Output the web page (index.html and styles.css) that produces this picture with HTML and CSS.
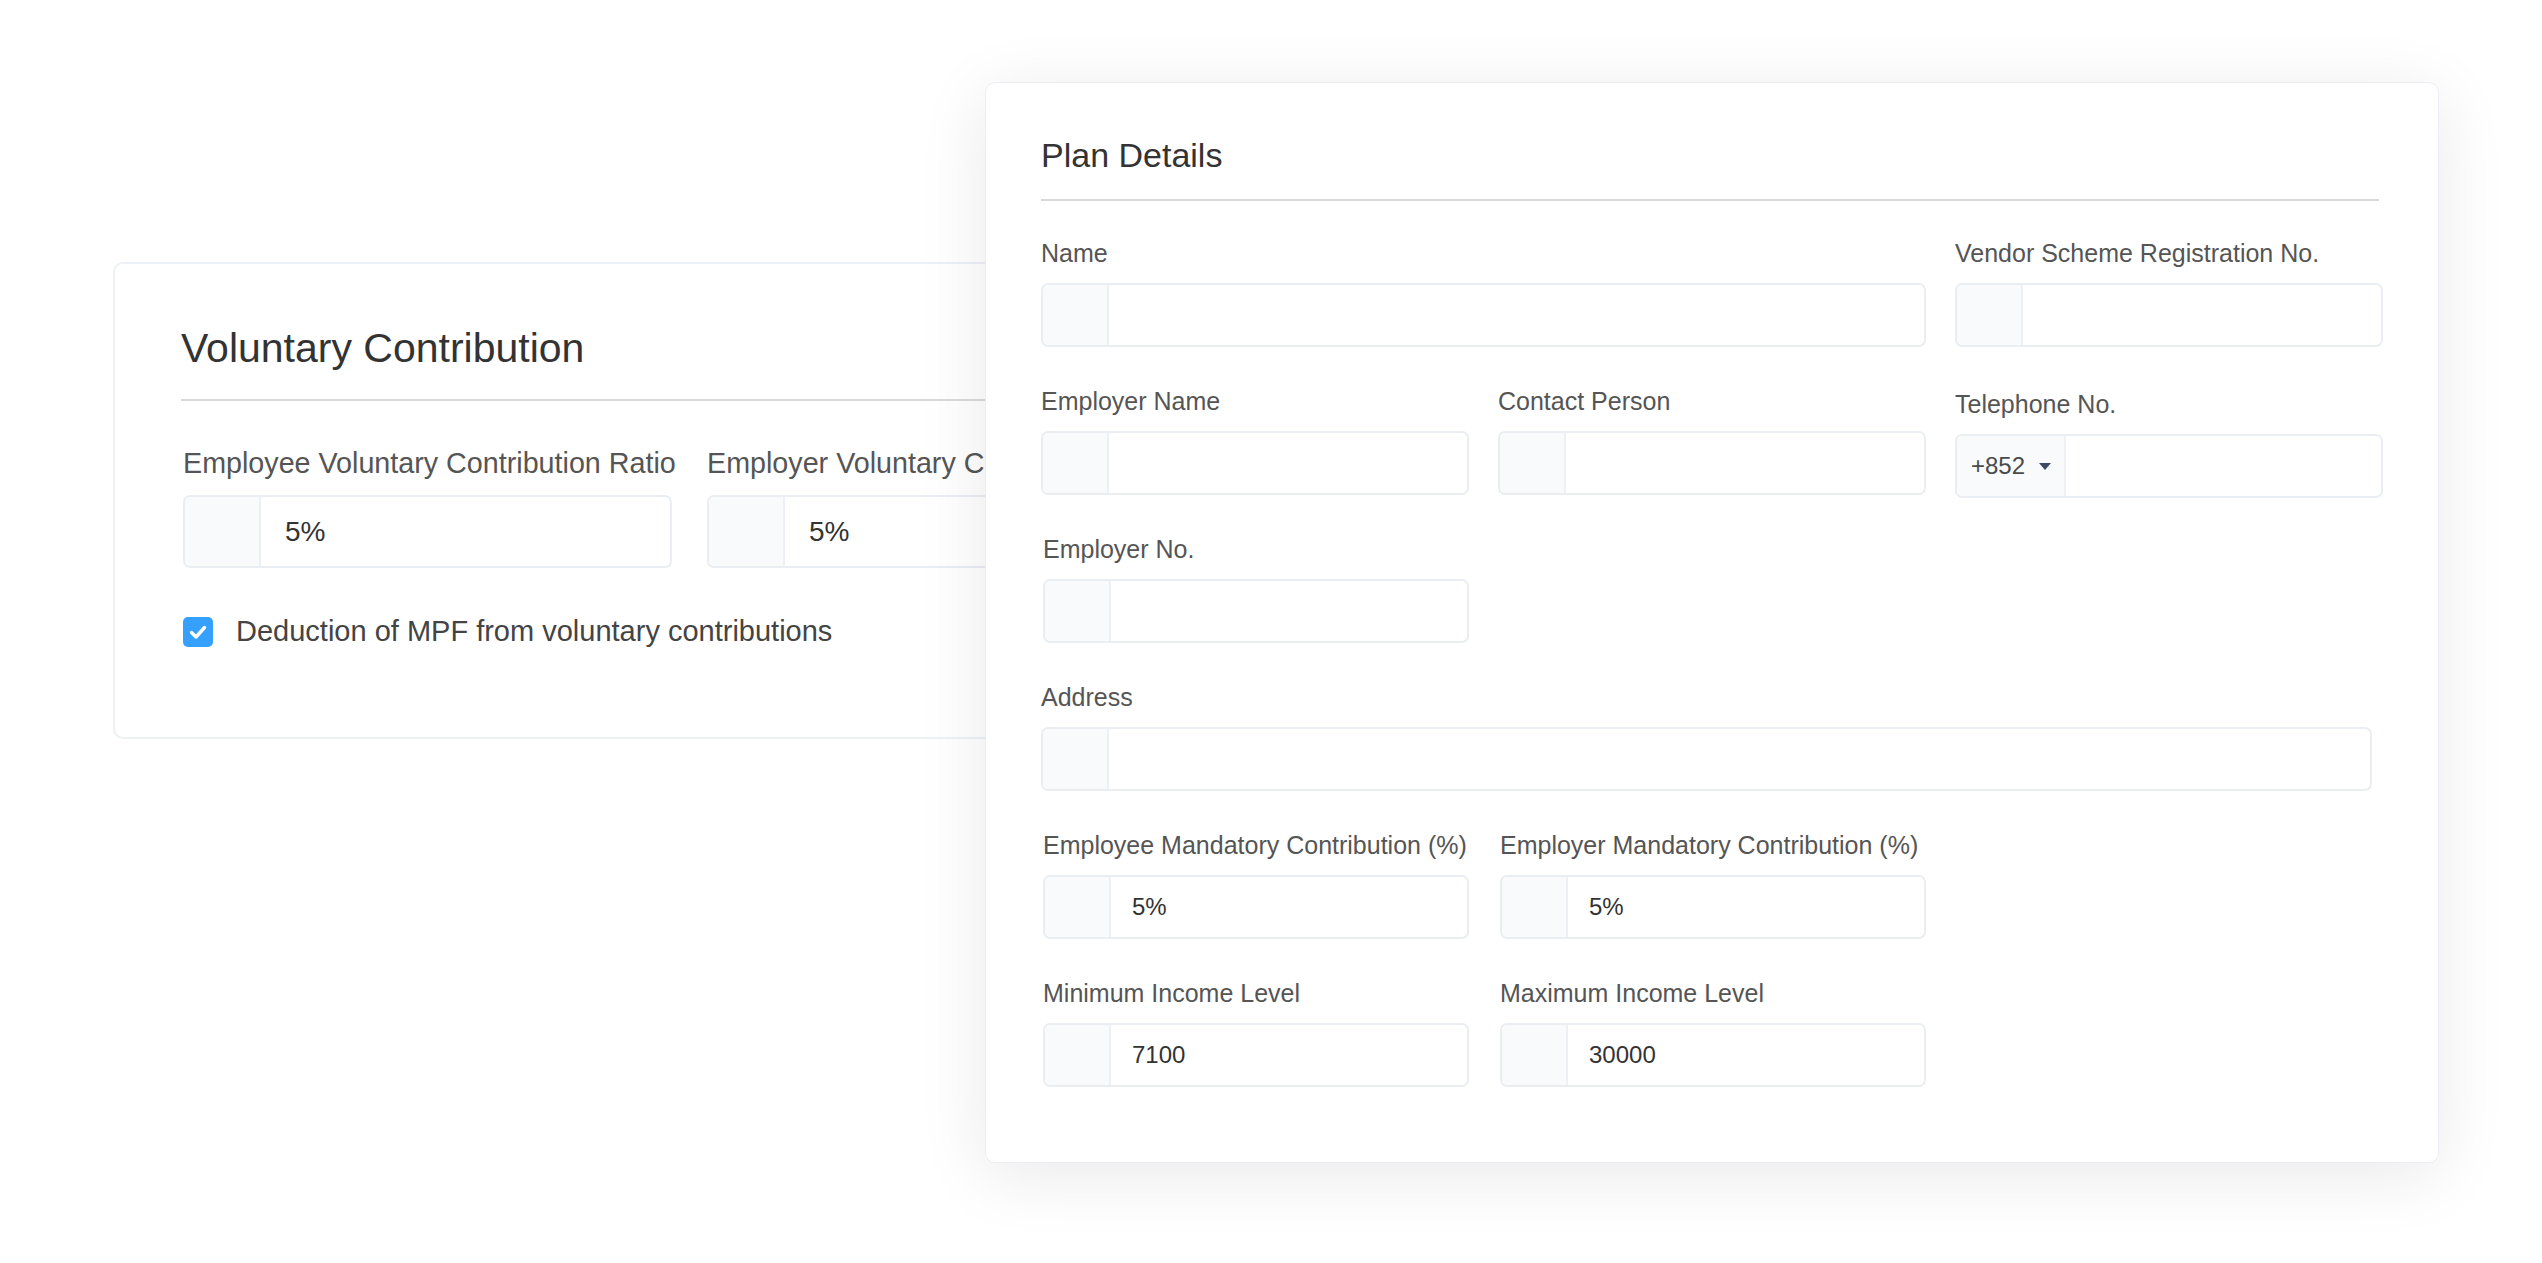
FILE: index.html
```html
<!DOCTYPE html>
<html>
<head>
<meta charset="utf-8" />
<link rel="stylesheet" href="styles.css">
</head>
<body>
<div class="stage">

	<!-- back card -->
	<section class="card card_vol">
		<h3 class="card_title">Voluntary Contribution</h3>
		<div class="vol_grid">
			<div class="field">
				<div class="field_label">Employee Voluntary Contribution Ratio</div>
				<div class="box"><span class="box_pre"></span><span class="box_val">5%</span></div>
			</div>
			<div class="field">
				<div class="field_label">Employer Voluntary Contribution Ratio</div>
				<div class="box"><span class="box_pre"></span><span class="box_val">5%</span></div>
			</div>
		</div>
		<div class="check_row">
			<span class="check">
				<svg width="30" height="30" viewBox="0 0 30 30"><polyline points="8.5,15.5 13,20 21.5,10.5" fill="none" stroke="#fff" stroke-width="3.4" stroke-linecap="round" stroke-linejoin="round"/></svg>
			</span>
			<span class="check_text">Deduction of MPF from voluntary contributions</span>
		</div>
	</section>

	<!-- front card -->
	<section class="card card_plan">
		<h3 class="card_title">Plan Details</h3>
		<div class="plan_grid">
			<div class="field span2">
				<div class="field_label">Name</div>
				<div class="box"><span class="box_pre"></span><span class="box_val"></span></div>
			</div>
			<div class="field">
				<div class="field_label">Vendor Scheme Registration No.</div>
				<div class="box"><span class="box_pre"></span><span class="box_val"></span></div>
			</div>

			<div class="field">
				<div class="field_label">Employer Name</div>
				<div class="box"><span class="box_pre"></span><span class="box_val"></span></div>
			</div>
			<div class="field">
				<div class="field_label">Contact Person</div>
				<div class="box"><span class="box_pre"></span><span class="box_val"></span></div>
			</div>
			<div class="field field_tel">
				<div class="field_label">Telephone No.</div>
				<div class="box"><span class="box_pre tel_pre">+852<i class="caret"></i></span><span class="box_val"></span></div>
			</div>

			<div class="field col1 nudge">
				<div class="field_label">Employer No.</div>
				<div class="box"><span class="box_pre"></span><span class="box_val"></span></div>
			</div>

			<div class="field span3">
				<div class="field_label">Address</div>
				<div class="box"><span class="box_pre"></span><span class="box_val"></span></div>
			</div>

			<div class="field col1 nudge">
				<div class="field_label">Employee Mandatory Contribution (%)</div>
				<div class="box"><span class="box_pre"></span><span class="box_val">5%</span></div>
			</div>
			<div class="field nudge">
				<div class="field_label">Employer Mandatory Contribution (%)</div>
				<div class="box"><span class="box_pre"></span><span class="box_val">5%</span></div>
			</div>

			<div class="field col1 nudge">
				<div class="field_label">Minimum Income Level</div>
				<div class="box"><span class="box_pre"></span><span class="box_val">7100</span></div>
			</div>
			<div class="field nudge">
				<div class="field_label">Maximum Income Level</div>
				<div class="box"><span class="box_pre"></span><span class="box_val">30000</span></div>
			</div>
		</div>
	</section>

</div>
</body>
</html>
```

FILE: styles.css
```css
html,body{
	margin:0;
	padding:0;
	background:#fff;
}
body{
	font-family:"Liberation Sans", Arial, sans-serif;
	color:#333;
}
h3{
	margin:0;
	font-weight:normal;
}

.stage{
	position:relative;
	width:2542px;
	height:1263px;
	overflow:hidden;
}

.card{
	position:absolute;
	box-sizing:border-box;
	background:#fff;
	border:2px solid #edf0f4;
	border-radius:10px;
}

/* ---- Voluntary Contribution ---- */
.card_vol{
	left:113px;
	top:262px;
	width:1150px;
	height:477px;
	padding:60px 0 0 66px;
	z-index:1;
}
.card_vol .card_title{
	font-size:41px;
	line-height:48px;
	color:#333;
	padding-bottom:27px;
	border-bottom:2px solid #d9d9d9;
}
.vol_grid{
	display:grid;
	grid-template-columns:489px 489px;
	column-gap:35px;
	margin-top:45px;
	padding-left:2px;
}
.card_vol .field_label{
	font-size:28.7px;
	line-height:34px;
	color:#555;
	white-space:nowrap;
}
.card_vol .box{
	height:73px;
	margin-top:15px;
}
.card_vol .box_pre{
	width:74px;
}
.card_vol .box_val{
	font-size:28px;
	padding-left:24px;
}
.check_row{
	display:flex;
	align-items:center;
	margin-top:47px;
	padding-left:2px;
}
.check{
	width:30px;
	height:30px;
	border-radius:5px;
	background:#35a0ff;
	display:flex;
}
.check_text{
	margin-left:23px;
	font-size:29px;
	color:#444;
}

/* ---- Plan Details ---- */
.card_plan{
	left:985px;
	top:82px;
	width:1454px;
	height:1081px;
	padding:52px 0 0 55px;
	border:1px solid #eaeef3;
	box-shadow:0 12px 70px rgba(0,0,0,0.09);
	z-index:2;
}
.card_plan .card_title{
	font-size:34px;
	line-height:40px;
	color:#333;
	padding-bottom:24px;
	border-bottom:2px solid #d9d9d9;
	width:1338px;
}
.plan_grid{
	display:grid;
	grid-template-columns:repeat(3, 428px);
	column-gap:29px;
	row-gap:39px;
	margin-top:36.5px;
}
.span2{
	grid-column:span 2;
}
.span3{
	grid-column:1 / -1;
	margin-right:11px;
}
.col1{
	grid-column:1;
}
.nudge{
	margin-left:2px;
}
.field_tel{
	margin:3px 0 -3px;
}
.field_label{
	font-size:25px;
	line-height:30px;
	color:#555;
	white-space:nowrap;
}

.box{
	display:flex;
	box-sizing:border-box;
	height:64px;
	margin-top:15px;
	border:2px solid #eaeef3;
	border-radius:7px;
	overflow:hidden;
	background:#fff;
}
.box_pre{
	flex:none;
	width:64px;
	background:#f8fafc;
	border-right:2px solid #edf0f4;
}
.box_val{
	display:flex;
	align-items:center;
	padding-left:21px;
	font-size:24px;
	color:#333;
}
.tel_pre{
	width:109px;
	box-sizing:border-box;
	display:flex;
	align-items:center;
	padding-left:14px;
	font-size:24px;
	color:#4a4a4a;
}
.caret{
	display:inline-block;
	margin-left:14px;
	margin-top:2px;
	width:0;
	height:0;
	border-left:6px solid transparent;
	border-right:6px solid transparent;
	border-top:7px solid #3d4a63;
}
```
